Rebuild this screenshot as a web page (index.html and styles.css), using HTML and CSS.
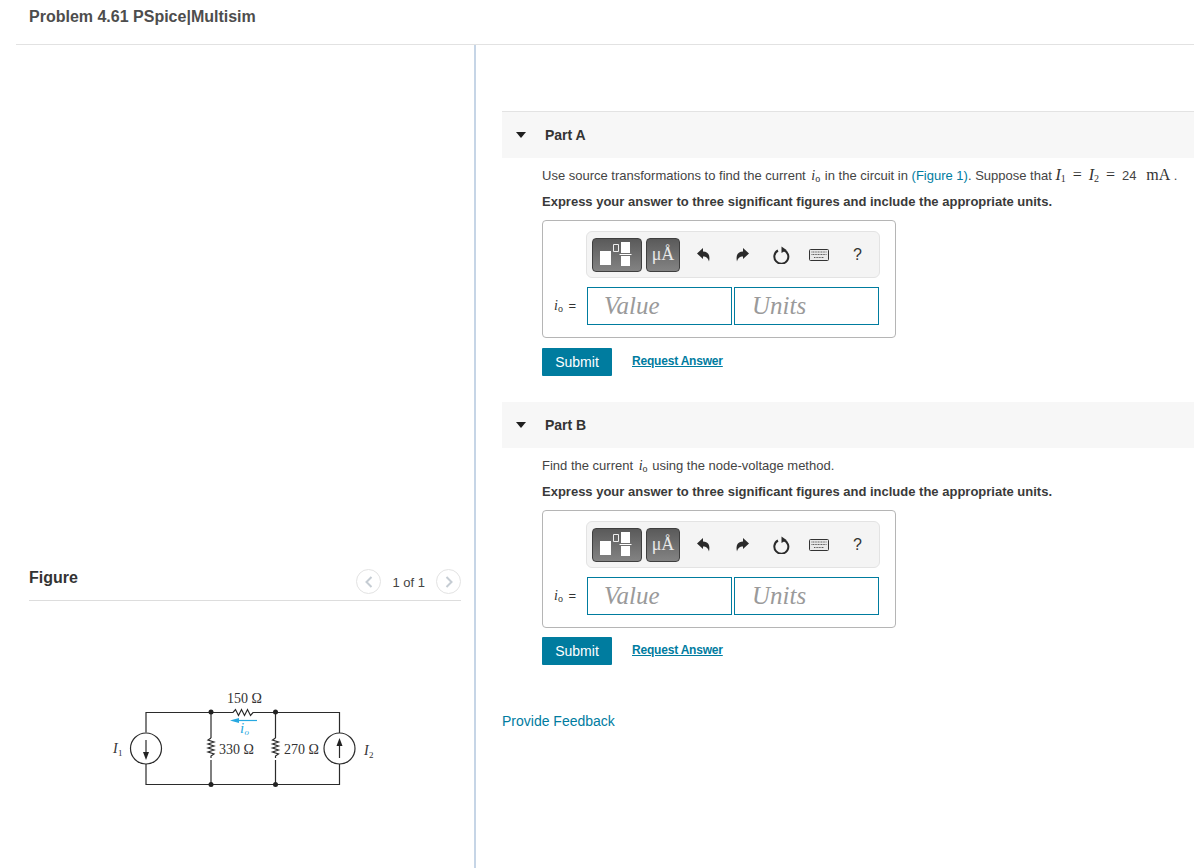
FILE: index.html
```html
<!DOCTYPE html>
<html lang="en">
<head>
<meta charset="utf-8">
<title>Problem 4.61 PSpice|Multisim</title>
<link rel="stylesheet" href="styles.css">
</head>
<body>
<header class="top"><h1>Problem 4.61 PSpice|Multisim</h1></header>
<main class="split">
  <aside class="left">
    <div class="fig-head">
      <span class="fig-title">Figure</span>
      <div class="pager">
        <span class="round"><svg width="10" height="12" viewBox="0 0 10 12"><path d="M7.500 1 2.500 6l5 5" class="chev"/></svg></span>
        <span class="count">1 of 1</span>
        <span class="round"><svg width="10" height="12" viewBox="0 0 10 12"><path d="M2.500 1l5 5-5 5" class="chev"/></svg></span>
      </div>
    </div>
    <svg class="circuit" width="290" height="120" viewBox="0 0 290 120">
      <g class="wire">
        <path d="M46 52.500V32.500H133l2.500-3 3 6 3-6 3 6 3-6 3 6 2.500-3H239.500V53M239.500 84V104.500H46V84"/>
        <path d="M111 32.500V58M111 80V104.500M175.500 32.500V58M175.500 80V104.500"/>
        <path d="M111 58l-3 2 6 2-6 2 6 2-6 2 6 2-6 2 6 2-3 2v2"/>
        <path d="M175.500 58l-3 2 6 2-6 2 6 2-6 2 6 2-6 2 6 2-3 2v2"/>
        <circle cx="46" cy="68.500" r="15.500"/>
        <circle cx="239.500" cy="68.500" r="15.500"/>
        <path d="M46 60V77M239.500 78V62"/>
      </g>
      <path class="fill" d="M46 80l-3-8h6zM239.500 58l-3 8h6z"/>
      <g class="fill">
        <circle cx="111" cy="32" r="2.500"/><circle cx="175.500" cy="32" r="2.500"/>
        <circle cx="111" cy="104.500" r="2.500"/><circle cx="175.500" cy="104.500" r="2.500"/>
      </g>
      <path class="blue-line" d="M136 40.500H157"/>
      <path class="blue-fill" d="M130 40.500l9-2.500v5z"/>
      <text class="ckt" x="127" y="23">150 Ω</text>
      <text class="ckt" x="119" y="74">330 Ω</text>
      <text class="ckt" x="184" y="74">270 Ω</text>
      <text class="ckt it" x="13" y="73">I</text><text class="ckt sm" x="18" y="76">1</text>
      <text class="ckt it" x="264" y="75">I</text><text class="ckt sm" x="269" y="78">2</text>
      <text class="ckt it blue big-io" x="140" y="53">i</text><text class="ckt it sm blue" x="144.500" y="55">o</text>
    </svg>
  </aside>
  <section class="right">
    <article class="part">
      <div class="part-head"><span class="caret"></span><h2>Part A</h2></div>
      <div class="part-body">
        <p class="q">Use source transformations to find the current <span class="m io"><i>i</i><sub>o</sub></span> in the circuit in <a class="figlink">(Figure 1)</a>. Suppose that <span class="m big"><i>I</i><sub>1</sub> = <i>I</i><sub>2</sub> = </span>24 <span class="m big unit">mA</span> .</p>
        <p class="q strong">Express your answer to three significant figures and include the appropriate units.</p>
        <div class="answer">
          <div class="toolbar">
            <button class="tbtn wide"><svg width="38" height="28" viewBox="0 0 38 28"><path class="wfill" d="M2 10h11v14H2zM23 1h9v11h-9zM23 15h9v10h-9zM21.500 13h12v1h-12z"/><path class="wline" d="M15.500 3.500h5v7h-5z"/></svg></button>
            <button class="tbtn unit-btn"><span>μÅ</span></button>
            <div class="tools">
              <svg width="16" height="16" viewBox="0 0 16 16"><path class="ic" d="M1 6.500 7 1v3.500c5 0 7.500 3.500 6 10-1-3.500-2.500-5-6-5V12z"/></svg>
              <svg width="16" height="16" viewBox="0 0 16 16"><path class="ic" d="M15 6.500 9 1v3.500c-5 0-7.500 3.500-6 10 1-3.500 2.500-5 6-5V12z"/></svg>
              <svg width="18" height="18" viewBox="0 0 18 18"><path class="ring" d="M6 4.500a7 7 0 1 0 5.500-.5"/><path class="ic" d="M9.500 0.500l5 3.500-5 3z"/></svg>
              <svg class="kbd" width="20" height="12" viewBox="0 0 20 12"><rect class="kb" x=".5" y=".5" width="19" height="11" rx="1"/><path class="kbk" d="M2.500 3h15M2.500 5.500h15M5 8.500h10"/></svg>
              <span class="help">?</span>
            </div>
          </div>
          <div class="row">
            <span class="lbl"><span class="m"><i>i</i><sub>o</sub></span> =</span>
            <div class="field">Value</div>
            <div class="field">Units</div>
          </div>
        </div>
        <div class="actions"><button class="submit">Submit</button><a class="req">Request Answer</a></div>
      </div>
    </article>
    <article class="part">
      <div class="part-head"><span class="caret"></span><h2>Part B</h2></div>
      <div class="part-body">
        <p class="q">Find the current <span class="m io"><i>i</i><sub>o</sub></span> using the node-voltage method.</p>
        <p class="q strong">Express your answer to three significant figures and include the appropriate units.</p>
        <div class="answer">
          <div class="toolbar">
            <button class="tbtn wide"><svg width="38" height="28" viewBox="0 0 38 28"><path class="wfill" d="M2 10h11v14H2zM23 1h9v11h-9zM23 15h9v10h-9zM21.500 13h12v1h-12z"/><path class="wline" d="M15.500 3.500h5v7h-5z"/></svg></button>
            <button class="tbtn unit-btn"><span>μÅ</span></button>
            <div class="tools">
              <svg width="16" height="16" viewBox="0 0 16 16"><path class="ic" d="M1 6.500 7 1v3.500c5 0 7.500 3.500 6 10-1-3.500-2.500-5-6-5V12z"/></svg>
              <svg width="16" height="16" viewBox="0 0 16 16"><path class="ic" d="M15 6.500 9 1v3.500c-5 0-7.500 3.500-6 10 1-3.500 2.500-5 6-5V12z"/></svg>
              <svg width="18" height="18" viewBox="0 0 18 18"><path class="ring" d="M6 4.500a7 7 0 1 0 5.500-.5"/><path class="ic" d="M9.500 0.500l5 3.500-5 3z"/></svg>
              <svg class="kbd" width="20" height="12" viewBox="0 0 20 12"><rect class="kb" x=".5" y=".5" width="19" height="11" rx="1"/><path class="kbk" d="M2.500 3h15M2.500 5.500h15M5 8.500h10"/></svg>
              <span class="help">?</span>
            </div>
          </div>
          <div class="row">
            <span class="lbl"><span class="m"><i>i</i><sub>o</sub></span> =</span>
            <div class="field">Value</div>
            <div class="field">Units</div>
          </div>
        </div>
        <div class="actions"><button class="submit">Submit</button><a class="req">Request Answer</a></div>
      </div>
    </article>
    <a class="feedback">Provide Feedback</a>
  </section>
</main>
</body>
</html>
```

FILE: styles.css
```css
* { box-sizing: border-box; }
html, body { margin: 0; padding: 0; }
body {
  width: 1194px;
  height: 868px;
  overflow: hidden;
  background: #fff;
  font-family: "Liberation Sans", Arial, sans-serif;
  color: #333;
  display: flex;
  flex-direction: column;
}
.top {
  height: 45px;
  margin-left: 16px;
  padding: 8px 0 0 13px;
  border-bottom: 1px solid #e2e2e2;
}
.top h1 {
  margin: 0;
  font-size: 16px;
  line-height: 18px;
  font-weight: 700;
  color: #4d4d4d;
}
.split { display: flex; flex: 1; min-height: 0; }
.left {
  width: 476px;
  flex: none;
  border-right: 2px solid #c6d5e6;
  padding: 519px 13px 0 29px;
}
.fig-head {
  height: 37px;
  display: flex;
  align-items: flex-start;
  justify-content: space-between;
  border-bottom: 1px solid #ddd;
}
.fig-title {
  font-size: 16px;
  line-height: 28px;
  font-weight: 700;
  color: #333;
}
.pager { display: flex; align-items: center; gap: 11px; padding-top: 5px; }
.round {
  width: 25px;
  height: 25px;
  border: 1px solid #e3e3e3;
  border-radius: 50%;
  display: flex;
  align-items: center;
  justify-content: center;
}
.chev { fill: none; stroke: #c5ccd3; stroke-width: 2; }
.count { font-size: 13px; color: #444; padding-top: 1px; }
.circuit { display: block; margin: 79px 0 0 71px; }
.wire path, .wire circle { fill: none; stroke: #2b2b2b; stroke-width: 1.200; }
.fill { fill: #222; }
.blue-line { fill: none; stroke: #27a8e0; stroke-width: 1.200; }
.blue-fill { fill: #27a8e0; }
.ckt { font-family: "Liberation Serif", serif; font-size: 14px; fill: #333; }
.ckt.it { font-style: italic; }
.ckt.sm { font-size: 9px; }
.ckt.blue { fill: #27a8e0; }
.ckt.big-io { font-size: 15px; }
.right { flex: 1; min-width: 0; padding: 66px 0 0 26px; }
.part { margin-bottom: 26px; }
.part-head {
  height: 47px;
  background: #f7f7f7;
  display: flex;
  align-items: center;
  padding-left: 14px;
}
.part:first-child .part-head { border-top: 1px solid #e3e3e3; }
.part + .part .part-head { height: 46px; }
.part + .part .part-body { padding-top: 10px; }
.part + .part .actions { margin-top: 9px; }
.caret {
  width: 0;
  height: 0;
  border-left: 5.500px solid transparent;
  border-right: 5.500px solid transparent;
  border-top: 6px solid #1f1f1f;
  margin-right: 19px;
}
.part-head h2 { margin: 0; font-size: 14px; font-weight: 700; color: #333; }
.part-body { padding: 9px 0 0 40px; }
.q {
  margin: 0 0 10px;
  font-size: 13px;
  line-height: 16px;
  color: #444;
  white-space: nowrap;
}
.q.strong { font-weight: 700; color: #3a3a3a; margin-bottom: 10px; }
.figlink { color: #007c9f; }
.m { font-family: "Liberation Serif", serif; font-size: 14px; color: #333; }
.m sub { font-size: 10px; line-height: 0; font-style: normal; vertical-align: -2px; }
.m.io { margin: 0 1px 0 2px; }
.m.big { font-size: 16px; word-spacing: 3px; }
.unit { margin-left: 6px; }
.answer {
  width: 354px;
  height: 118px;
  border: 1px solid #b5b5b5;
  border-radius: 4px;
  padding: 10px 15px 0 43px;
}
.toolbar {
  height: 47px;
  background: #f4f4f4;
  border: 1px solid #e3e3e3;
  border-radius: 6px;
  display: flex;
  align-items: center;
  padding: 0 0 0 5px;
  width: 294px;
}
.tbtn {
  height: 34px;
  border: 1px solid #3f3f3f;
  border-radius: 4px;
  padding: 0;
  background: linear-gradient(#5a5a5a, #838383);
  display: flex;
  align-items: center;
  justify-content: center;
}
.wide { width: 50px; margin-right: 4px; }
.unit-btn { width: 34px; }
.unit-btn span { font-family: "Liberation Serif", serif; font-size: 18px; color: #e8e8e8; }
.wfill { fill: #fff; }
.wline { fill: none; stroke: #eee; stroke-width: 1; }
.tools {
  flex: 1;
  display: flex;
  align-items: center;
  gap: 22px;
  padding-left: 16px;
}
.kbd { margin-left: -3px; }
.ic { fill: #2a2a2a; }
.ring { fill: none; stroke: #2a2a2a; stroke-width: 2; }
.kb { fill: #e9e9e9; stroke: #333; }
.kbk { fill: none; stroke: #555; stroke-width: 1.200; stroke-dasharray: 1 .6; }
.help { font-size: 16px; color: #333; margin-left: 2px; }
.row { display: flex; align-items: center; margin-top: 9px; margin-left: -33px; gap: 2px; }
.lbl { width: 32px; padding-left: 1px; font-size: 13px; word-spacing: 2px; color: #333; white-space: nowrap; }
.field {
  width: 145px;
  height: 38px;
  border: 1px solid #007c9f;
  padding-left: 16px;
  font-family: "Liberation Serif", serif;
  font-style: italic;
  font-size: 25px;
  line-height: 36px;
  color: #9a9a9a;
}
.field + .field { padding-left: 17px; }
.actions { display: flex; align-items: flex-start; margin-top: 10px; height: 28px; }
.submit {
  width: 70px;
  height: 28px;
  background: #007c9f;
  border: 0;
  border-radius: 1px;
  color: #fff;
  font: 14px "Liberation Sans", Arial, sans-serif;
  padding: 0;
}
.req {
  margin: 5px 0 0 20px;
  font-size: 12px;
  line-height: 16px;
  font-weight: 700;
  letter-spacing: -.2px;
  color: #007c9f;
  text-decoration: underline;
}
.feedback { display: block; margin-top: 48px; font-size: 14px; line-height: 16px; color: #007c9f; }
```
